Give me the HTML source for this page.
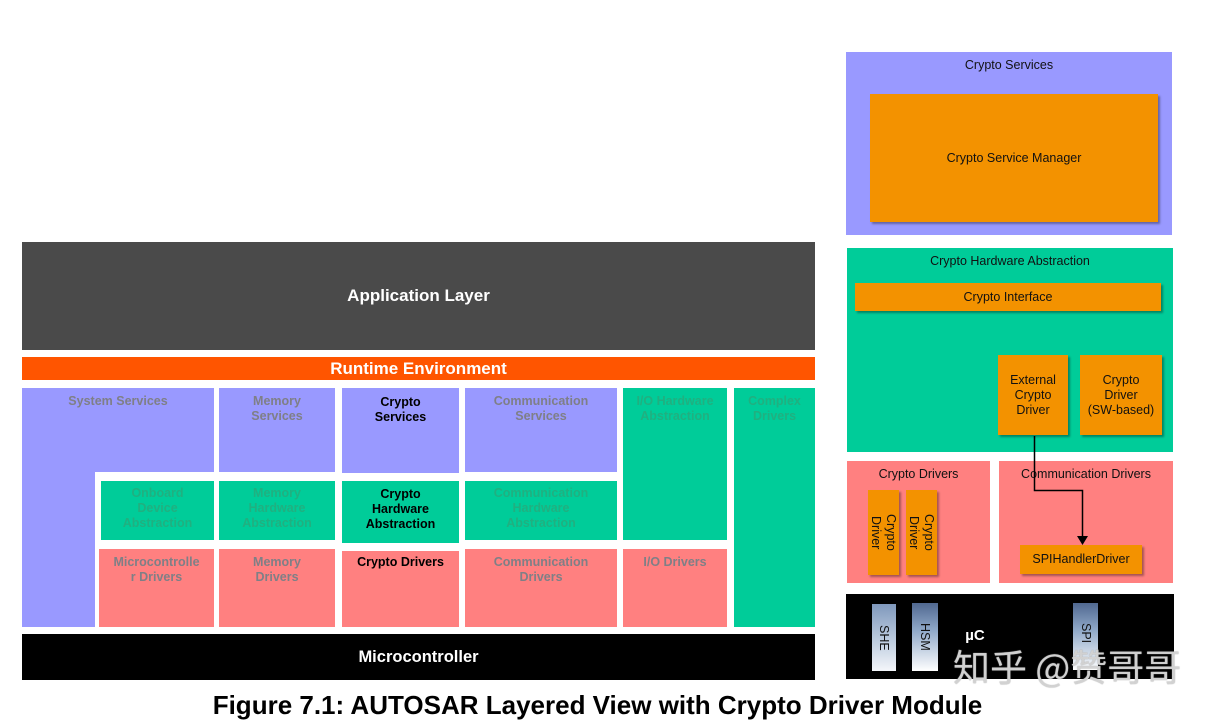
<!DOCTYPE html>
<html><head><meta charset="utf-8"><style>
body{margin:0;width:1213px;height:725px;background:#fff;position:relative;overflow:hidden;font-family:"Liberation Sans",Arial,sans-serif}
.b{position:absolute;box-sizing:border-box;text-align:center;font-weight:bold;font-size:12.5px;line-height:15px;color:#7f7f86}
.p{background:#9999ff}.g{background:#00cc99}.r{background:#ff8080}
.o{background:#f39200;box-shadow:2px 2px 2px rgba(0,0,0,.35)}
.n{font-weight:normal;color:#111;font-size:12.5px}
.k{color:#000}
</style></head><body>
<div class="b" style="left:22px;top:242px;width:793px;height:108px;background:#4a4a4a;color:#fff;font-size:17px;line-height:108px">Application Layer</div>
<div class="b" style="left:22px;top:357px;width:793px;height:23px;background:#ff5500;color:#fff;font-size:17px;line-height:23px">Runtime Environment</div>

<div class="b p" style="left:22px;top:388px;width:192px;height:84px;padding-top:6px">System Services</div>
<div class="b p" style="left:22px;top:470px;width:73px;height:157px"></div>
<div class="b p" style="left:219px;top:388px;width:116px;height:84px;padding-top:6px">Memory<br>Services</div>
<div class="b p k" style="left:342px;top:388px;width:117px;height:85px;padding-top:7px">Crypto<br>Services</div>
<div class="b p" style="left:465px;top:388px;width:152px;height:84px;padding-top:6px">Communication<br>Services</div>
<div class="b g" style="left:623px;top:388px;width:104px;height:152px;padding-top:6px;color:#20b080">I/O Hardware<br>Abstraction</div>
<div class="b g" style="left:734px;top:388px;width:81px;height:239px;padding-top:6px;color:#20b080">Complex<br>Drivers</div>

<div class="b g" style="left:101px;top:481px;width:113px;height:59px;padding-top:5px;color:#20b080">Onboard<br>Device<br>Abstraction</div>
<div class="b g" style="left:219px;top:481px;width:116px;height:59px;padding-top:5px;color:#20b080">Memory<br>Hardware<br>Abstraction</div>
<div class="b g k" style="left:342px;top:481px;width:117px;height:62px;padding-top:6px">Crypto<br>Hardware<br>Abstraction</div>
<div class="b g" style="left:465px;top:481px;width:152px;height:59px;padding-top:5px;color:#20b080">Communication<br>Hardware<br>Abstraction</div>

<div class="b r" style="left:99px;top:549px;width:115px;height:78px;padding-top:6px">Microcontrolle<br>r Drivers</div>
<div class="b r" style="left:219px;top:549px;width:116px;height:78px;padding-top:6px">Memory<br>Drivers</div>
<div class="b r k" style="left:342px;top:551px;width:117px;height:76px;padding-top:4px">Crypto Drivers</div>
<div class="b r" style="left:465px;top:549px;width:152px;height:78px;padding-top:6px">Communication<br>Drivers</div>
<div class="b r" style="left:623px;top:549px;width:104px;height:78px;padding-top:6px">I/O Drivers</div>

<div class="b" style="left:22px;top:634px;width:793px;height:46px;background:#000;color:#fff;font-size:16.5px;line-height:46px">Microcontroller</div>
<div class="b" style="left:0;top:690px;width:1195px;height:30px;color:#000;font-size:26px;line-height:30px">Figure 7.1: AUTOSAR Layered View with Crypto Driver Module</div>

<div class="b p n" style="left:846px;top:52px;width:326px;height:183px;padding-top:6px">Crypto Services</div>
<div class="b o n" style="left:870px;top:94px;width:288px;height:128px;line-height:128px">Crypto Service Manager</div>

<div class="b g n" style="left:847px;top:248px;width:326px;height:204px;padding-top:6px">Crypto Hardware Abstraction</div>
<div class="b o n" style="left:855px;top:283px;width:306px;height:28px;line-height:28px">Crypto Interface</div>
<div class="b o n" style="left:998px;top:355px;width:70px;height:80px;padding-top:18px">External<br>Crypto<br>Driver</div>
<div class="b o n" style="left:1080px;top:355px;width:82px;height:80px;padding-top:18px">Crypto<br>Driver<br>(SW-based)</div>

<div class="b r n" style="left:847px;top:461px;width:143px;height:122px;padding-top:6px">Crypto Drivers</div>
<div class="b o n" style="left:868px;top:490px;width:31px;height:85px;writing-mode:vertical-rl;line-height:15px;padding-right:1px">Crypto<br>Driver</div>
<div class="b o n" style="left:906px;top:490px;width:31px;height:85px;writing-mode:vertical-rl;line-height:15px;padding-right:1px">Crypto<br>Driver</div>
<div class="b r n" style="left:999px;top:461px;width:174px;height:122px;padding-top:6px">Communication Drivers</div>
<div class="b o n" style="left:1020px;top:545px;width:122px;height:29px;line-height:29px">SPIHandlerDriver</div>
<svg style="position:absolute;left:0;top:0" width="1213" height="725"><path d="M1034.5 436V490.5H1082.5V537" fill="none" stroke="#000" stroke-width="1.5"/><path d="M1077 536L1088 536L1082.5 545Z" fill="#000"/></svg>

<div class="b" style="left:846px;top:594px;width:328px;height:85px;background:#000"></div>
<div class="b n" style="left:872px;top:604px;width:24px;height:67px;background:linear-gradient(#7f98bc,#b8c8dc 50%,#f4f6fa);writing-mode:vertical-rl;line-height:24px">SHE</div>
<div class="b n" style="left:912px;top:603px;width:26px;height:68px;background:linear-gradient(#506890,#8fa8c8 40%,#fff);writing-mode:vertical-rl;line-height:26px">HSM</div>
<div class="b" style="left:960px;top:628px;width:30px;color:#fff;font-size:15px">µC</div>
<div class="b n" style="left:1073px;top:603px;width:25px;height:67px;background:linear-gradient(#506890,#8fa8c8 40%,#fff);writing-mode:vertical-rl;line-height:25px;padding-top:20px;text-align:left">SPI</div>
<div style="position:absolute;left:953px;top:643px;font-family:'Noto Sans CJK SC',sans-serif;font-size:37px;line-height:44px;color:rgba(215,215,215,.9);text-shadow:0 0 1px #999;white-space:nowrap">知乎 @赞哥哥</div>
</body></html>
